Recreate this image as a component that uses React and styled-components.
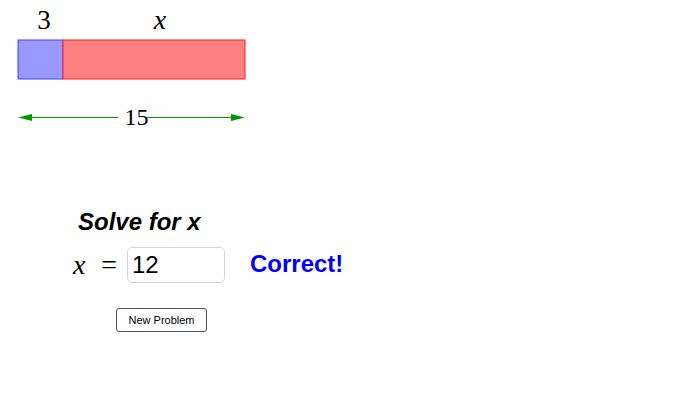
import React from 'react';
import styled, { createGlobalStyle } from 'styled-components';

const GlobalStyle = createGlobalStyle`
  html, body {
    margin: 0;
    padding: 0;
    background: #ffffff;
  }
`;

const Stage = styled.div`
  width: 679px;
  height: 419px;
  overflow: hidden;
  background: #ffffff;
  font-family: 'Liberation Sans', Arial, sans-serif;
`;

const Diagram = styled.svg`
  display: block;
  width: 260px;
  height: 135px;
`;

const Panel = styled.div`
  display: flex;
  flex-direction: column;
  align-items: flex-start;
  margin-top: 73px;
  padding-left: 73px;
`;

const Heading = styled.div`
  margin-left: 5px;
  font-size: 24px;
  line-height: 28px;
  font-weight: bold;
  font-style: italic;
  color: #000000;
`;

const AnswerRow = styled.div`
  display: flex;
  align-items: center;
  height: 36px;
  margin-top: 11px;
`;

const MathLabel = styled.span`
  display: flex;
  align-items: center;
  justify-content: space-between;
  width: 44px;
  margin-right: 10px;
  font-family: 'Liberation Serif', 'Times New Roman', serif;
  font-size: 28px;
  line-height: 36px;
  color: #000000;

  i {
    font-style: italic;
  }
`;

const AnswerInput = styled.input`
  box-sizing: border-box;
  width: 98px;
  height: 36px;
  padding: 0 0 0 4px;
  border: 1px solid #d4d4d4;
  border-radius: 5px;
  font-family: 'Liberation Sans', Arial, sans-serif;
  font-size: 24px;
  color: #000000;
  outline: none;
`;

const Feedback = styled.span`
  margin-left: 25px;
  font-size: 24px;
  line-height: 30px;
  margin-top: -3px;
  font-weight: bold;
  color: ${(p) => (p.ok ? '#0000ff' : '#cc0000')};
`;

const ActionButton = styled.button`
  box-sizing: border-box;
  margin-top: 25px;
  margin-left: 43px;
  width: 91px;
  height: 24px;
  padding: 0;
  background: #ffffff;
  border: 1px solid #555555;
  border-radius: 3px;
  font-family: 'Liberation Sans', Arial, sans-serif;
  font-size: 11px;
  color: #000000;
`;

const serif = "'Liberation Serif', 'Times New Roman', serif";

const BarDiagram = ({ known, total }) => (
  <Diagram viewBox="0 0 260 135">
    <text x="44" y="29" textAnchor="middle" fontFamily={serif} fontSize="27">{known}</text>
    <text x="160" y="29" textAnchor="middle" fontFamily={serif} fontSize="28" fontStyle="italic">x</text>
    <rect x="18" y="40" width="45" height="39" fill="#9999ff" stroke="#4040ff" strokeWidth="1" />
    <rect x="63" y="40" width="182" height="39" fill="#ff8080" stroke="#ff2020" strokeWidth="1" />
    <g stroke="#009900" strokeWidth="1">
      <line x1="24" y1="117.5" x2="118" y2="117.5" />
      <line x1="147" y1="117.5" x2="239" y2="117.5" />
    </g>
    <polygon points="18,117.5 32,114 32,121" fill="#009900" />
    <polygon points="245,117.5 231,114 231,121" fill="#009900" />
    <text x="136.5" y="125" textAnchor="middle" fontFamily={serif} fontSize="24">{total}</text>
  </Diagram>
);

const App = () => (
  <Stage>
    <GlobalStyle />
    <BarDiagram known={3} total={15} />
    <Panel>
      <Heading>Solve for x</Heading>
      <AnswerRow>
        <MathLabel><i>x</i><span>=</span></MathLabel>
        <AnswerInput defaultValue="12" />
        <Feedback ok>Correct!</Feedback>
      </AnswerRow>
      <ActionButton>New Problem</ActionButton>
    </Panel>
  </Stage>
);

export default App;
